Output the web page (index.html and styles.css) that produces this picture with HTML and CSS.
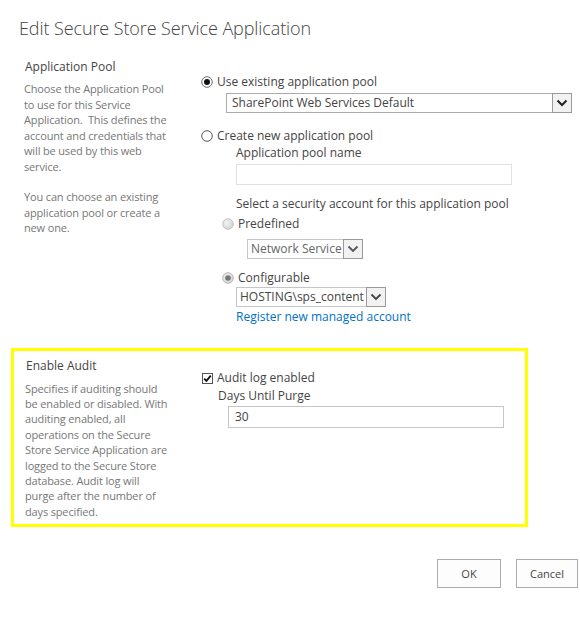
FILE: index.html
```html
<!DOCTYPE html>
<html>
<head>
<meta charset="utf-8">
<link rel="stylesheet" href="styles.css">
</head>
<body>
<div class="page">
  <h1 class="title">Edit Secure Store Service Application</h1>

  <div class="section pool">
    <div class="left">
      <div class="heading">Application Pool</div>
      <p class="desc">Choose the Application Pool<br>to use for this Service<br>Application.&nbsp; This defines the<br>account and credentials that<br>will be used by this web<br>service.</p>
      <p class="desc desc2">You can choose an existing<br>application pool or create a<br>new one.</p>
    </div>
    <div class="right">
      <div class="opt r1">
        <svg class="radio" width="12" height="12" viewBox="0 0 12 12"><circle cx="6" cy="6" r="5.3" fill="#fff" stroke="#6d6d6d" stroke-width="1"/><circle cx="6" cy="6" r="3" fill="#111"/></svg>
        <span>Use existing application pool</span>
      </div>
      <div class="select sel-default">
        <span class="val">SharePoint Web Services Default</span>
        <span class="arrow"><svg width="12" height="8" viewBox="0 0 12 8"><path d="M1.5 1.5 L6 6 L10.5 1.5" fill="none" stroke="#222" stroke-width="2"/></svg></span>
      </div>
      <div class="opt r2">
        <svg class="radio" width="12" height="12" viewBox="0 0 12 12"><circle cx="6" cy="6" r="5.3" fill="#fff" stroke="#555" stroke-width="1"/></svg>
        <span>Create new application pool</span>
      </div>
      <div class="label indent poolname-label">Application pool name</div>
      <div class="textbox poolname"></div>
      <div class="label indent sec">Select a security account for this application pool</div>
      <div class="opt sub predefined">
        <svg class="radio" width="12" height="12" viewBox="0 0 12 12"><defs><radialGradient id="gd" cx="0.4" cy="0.4" r="0.7"><stop offset="0" stop-color="#f4f4f4"/><stop offset="1" stop-color="#cfcfcf"/></radialGradient></defs><circle cx="6" cy="6" r="5.3" fill="url(#gd)" stroke="#c4c4c4" stroke-width="1"/></svg>
        <span>Predefined</span>
      </div>
      <div class="select sel-network">
        <span class="val">Network Service</span>
        <span class="arrow"><svg width="12" height="8" viewBox="0 0 12 8"><path d="M1.5 1.5 L6 6 L10.5 1.5" fill="none" stroke="#555" stroke-width="1.8"/></svg></span>
      </div>
      <div class="opt sub configurable">
        <svg class="radio" width="12" height="12" viewBox="0 0 12 12"><defs><radialGradient id="gc" cx="0.4" cy="0.4" r="0.7"><stop offset="0" stop-color="#f4f4f4"/><stop offset="1" stop-color="#cfcfcf"/></radialGradient></defs><circle cx="6" cy="6" r="5.3" fill="url(#gc)" stroke="#b8b8b8" stroke-width="1"/><circle cx="6" cy="6" r="2.8" fill="#777"/></svg>
        <span>Configurable</span>
      </div>
      <div class="select sel-hosting">
        <span class="val">HOSTING\sps_content</span>
        <span class="arrow"><svg width="12" height="8" viewBox="0 0 12 8"><path d="M1.5 1.5 L6 6 L10.5 1.5" fill="none" stroke="#444" stroke-width="1.8"/></svg></span>
      </div>
      <a class="link" href="#">Register new managed account</a>
    </div>
  </div>

  <div class="audit-box">
    <div class="section audit">
      <div class="left">
        <div class="heading">Enable Audit</div>
        <p class="desc">Specifies if auditing should<br>be enabled or disabled. With<br>auditing enabled, all<br>operations on the Secure<br>Store Service Application are<br>logged to the Secure Store<br>database. Audit log will<br>purge after the number of<br>days specified.</p>
      </div>
      <div class="right">
        <div class="opt chk">
          <svg class="checkbox" width="11" height="11" viewBox="0 0 11 11"><rect x="0.5" y="0.5" width="10" height="10" fill="#fff" stroke="#555"/><path d="M2.2 5.6 L4.4 7.9 L8.8 2.6" fill="none" stroke="#111" stroke-width="1.8"/></svg>
          <span>Audit log enabled</span>
        </div>
        <div class="label days">Days Until Purge</div>
        <div class="textbox purge"><span>30</span></div>
      </div>
    </div>
  </div>

  <div class="buttons">
    <button class="btn ok">OK</button>
    <button class="btn cancel">Cancel</button>
  </div>
</div>
</body>
</html>
```
FILE: styles.css
```css
html, body {
  margin: 0;
  padding: 0;
  background: #fff;
}
body {
  font-family: "Open Sans", "Noto Sans", sans-serif;
  color: #444;
  width: 580px;
  height: 631px;
  overflow: hidden;
}
.page {
  padding: 0;
}
.title {
  margin: 0;
  padding: 14px 0 0 19px;
  font-size: 18px;
  font-weight: 300;
  line-height: 28px;
  color: #444;
  letter-spacing: -0.1px;
}
.section {
  display: grid;
  grid-template-columns: 178px 1fr;
}
.pool {
  margin-top: 16px;
  padding-left: 24px;
}
.heading {
  font-size: 12px;
  line-height: 18px;
  color: #444;
  padding-left: 1px;
}
.desc {
  margin: 5px 0 0 0;
  font-size: 11px;
  line-height: 15.5px;
  color: #777;
  letter-spacing: -0.15px;
}
.desc2 {
  margin-top: 15px;
}
.right {
  font-size: 12px;
  color: #444;
}
.opt {
  display: flex;
  align-items: center;
  height: 14px;
  line-height: 14px;
  white-space: nowrap;
}
.opt .radio {
  flex: none;
  margin-right: 4px;
}
.r1 { margin-top: 17px; margin-left: -1px; }
.r2 { margin-top: 16px; margin-left: -1px; }
.select {
  display: flex;
  border: 1px solid #ababab;
  background: #fff;
  box-sizing: border-box;
  font-size: 12px;
  color: #444;
}
.select .val {
  flex: 1;
  padding-left: 5px;
  white-space: nowrap;
  overflow: hidden;
}
.select .arrow {
  flex: none;
  width: 18px;
  margin: -1px -1px -1px 0;
  border: 1px solid #9a9a9a;
  background: #f2f2f2;
  display: flex;
  align-items: center;
  justify-content: center;
}
.sel-default {
  margin: 4px 0 0 24px;
  width: 346px;
  height: 20px;
  line-height: 18px;
}
.label {
  font-size: 12px;
  line-height: 14px;
  white-space: nowrap;
}
.indent {
  margin-left: 34px;
}
.poolname-label {
  margin-top: 2.5px;
}
.textbox {
  box-sizing: border-box;
  border: 1px solid #e1e1e1;
  background: #fff;
  font-size: 12px;
}
.poolname {
  margin: 4.5px 0 0 34px;
  width: 276px;
  height: 21px;
}
.sec {
  margin-top: 12px;
}
.sub {
  margin-left: 20px;
}
.predefined {
  margin-top: 6px;
}
.sel-network {
  margin: 8px 0 0 45px;
  width: 116px;
  height: 20px;
  line-height: 18px;
  border-color: #c6c6c6;
}
.sel-network .val {
  padding-left: 3px;
  color: #666;
}
.configurable {
  margin-top: 12px;
}
.sel-hosting {
  margin: 2px 0 0 34px;
  width: 150px;
  height: 20px;
  line-height: 18px;
  border-color: #c6c6c6;
}
.sel-hosting .val {
  padding-left: 3px;
}
.link {
  display: block;
  margin: 3px 0 0 34px;
  font-size: 12px;
  line-height: 14px;
  color: #0072c6;
  text-decoration: none;
  white-space: nowrap;
}
.audit-box {
  margin: 24px 0 0 11px;
  width: 517px;
  height: 179px;
  box-sizing: border-box;
  border: 3px solid #ffff00;
}
.audit {
  padding-left: 11px;
}
.audit .heading {
  margin-top: 6px;
}
.audit .desc {
  margin-top: 5.5px;
  line-height: 15.4px;
}
.chk {
  margin-top: 20px;
  margin-left: -1px;
}
.chk .checkbox {
  flex: none;
  margin-right: 4px;
}
.days {
  margin: 4px 0 0 15px;
}
.purge {
  margin: 3px 0 0 25px;
  width: 276px;
  height: 22px;
  border-color: #c6c6c6;
  line-height: 20px;
  padding-left: 6px;
}
.buttons {
  display: flex;
  justify-content: flex-end;
  gap: 15px;
  margin-top: 32px;
  padding-right: 2px;
}
.btn {
  font-family: "Open Sans", "Noto Sans", sans-serif;
  font-size: 11px;
  color: #444;
  background: #fdfdfd;
  border: 1px solid #ababab;
  height: 29px;
  padding: 0;
  min-width: 62px;
  margin: 0;
}
.ok {
  width: 64px;
}
.cancel {
  width: 61px;
}
```
